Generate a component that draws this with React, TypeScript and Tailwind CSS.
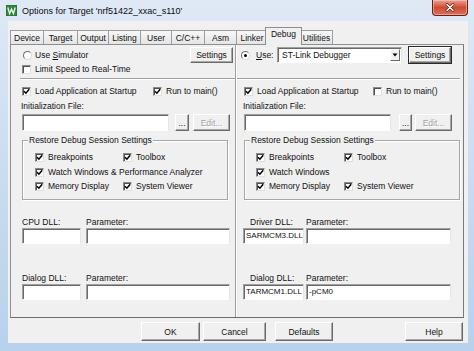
import React from "react";

const T = "text-[8.5px] leading-[12px] text-[#111]";

function Box({ checked }: { checked: boolean }) {
  return (
    <span className="flex items-center justify-center w-[9px] h-[9px] shrink-0 bg-white border border-t-[#8a8a8a] border-l-[#8a8a8a] border-b-[#e0e0e0] border-r-[#e0e0e0] shadow-[inset_1px_1px_0_#505050]">
      {checked && (
        <svg viewBox="0 0 7 7" className="w-[7px] h-[7px]">
          <path d="M1 3.2 L2.9 5.2 L6.2 1.2" stroke="#000" strokeWidth="1.5" fill="none" />
        </svg>
      )}
    </span>
  );
}

function CB({ checked, label, className = "" }: { checked: boolean; label: React.ReactNode; className?: string }) {
  return (
    <div className={`flex items-center h-[12px] shrink-0 ${className}`}>
      <Box checked={checked} />
      <span className={`ml-[4px] whitespace-nowrap ${T}`}>{label}</span>
    </div>
  );
}

function Radio({ on }: { on: boolean }) {
  return (
    <span className="flex items-center justify-center w-[9px] h-[9px] shrink-0 rounded-full bg-white border border-t-[#6f6f6f] border-l-[#6f6f6f] border-b-[#d8d8d8] border-r-[#d8d8d8]">
      {on && <span className="w-[3px] h-[3px] rounded-full bg-black" />}
    </span>
  );
}

function Btn({
  children,
  className = "",
  disabled = false,
  def = false,
}: {
  children: React.ReactNode;
  className?: string;
  disabled?: boolean;
  def?: boolean;
}) {
  return (
    <button
      type="button"
      className={`flex items-center justify-center shrink-0 bg-[#f0f0f0] border border-t-white border-l-white border-b-[#6a6a6a] border-r-[#6a6a6a] shadow-[inset_-1px_-1px_0_#a8a8a8] ${T} ${
        def ? "outline outline-1 outline-[#2a2a2a]" : ""
      } ${disabled ? "text-[#a2a2a2] [text-shadow:1px_1px_0_#fff]" : ""} ${className}`}
    >
      {children}
    </button>
  );
}

function Field({ value = "", className = "" }: { value?: string; className?: string }) {
  return (
    <div
      className={`flex items-center shrink-0 overflow-hidden whitespace-nowrap bg-white border border-t-[#a0a0a0] border-l-[#a0a0a0] border-b-white border-r-[#e6e6e6] shadow-[inset_1px_1px_0_#6a6a6a] pl-[2px] text-[8px] leading-[12px] text-[#111] ${className}`}
    >
      {value}
    </div>
  );
}

function Sep({ className = "" }: { className?: string }) {
  return <div className={`h-[2px] border-t border-t-[#a0a0a0] border-b border-b-white ${className}`} />;
}

function Group({ className = "", children }: { className?: string; children: React.ReactNode }) {
  return (
    <div
      className={`relative h-[60px] border border-[#a6a6a6] shadow-[inset_1px_1px_0_#fff,1px_1px_0_#fff] flex flex-col ${className}`}
    >
      <span className={`absolute -top-[7px] left-[5px] bg-[#f0f0f0] px-[1px] whitespace-nowrap ${T}`}>
        Restore Debug Session Settings
      </span>
      {children}
    </div>
  );
}

const tabs: [string, number][] = [
  ["Device", 33],
  ["Target", 34],
  ["Output", 31],
  ["Listing", 32],
  ["User", 31],
  ["C/C++", 33],
  ["Asm", 32],
  ["Linker", 31],
  ["Debug", 33],
  ["Utilities", 33],
];

export default function App() {
  return (
    <div className="w-[474px] h-[351px] overflow-hidden flex flex-col bg-gradient-to-b from-[#dfe9f6] via-[#c9dcf1] to-[#b8d1ec] font-['Liberation_Sans',Arial,sans-serif]">
      {/* Title bar */}
      <div className="h-[21px] flex items-center shrink-0">
        <svg viewBox="0 0 11 11" className="ml-[6px] w-[11px] h-[11px] shrink-0">
          <rect x="0" y="0" width="11" height="11" fill="#2f8a3b" stroke="#1d5d26" strokeWidth="0.8" />
          <path d="M1.8 2.5 L3.6 8.6 L5.5 4.2 L7.4 8.6 L9.2 2.5" stroke="#f4f4f4" strokeWidth="1.3" fill="none" />
        </svg>
        <span className="ml-[5px] text-[9px] leading-[12px] text-[#0b0b0b] whitespace-nowrap">
          Options for Target 'nrf51422_xxac_s110'
        </span>
        <div className="ml-auto mr-[6px] self-start w-[36px] h-[16px] rounded-b-[4px] border border-t-0 border-[#6b1e12] bg-gradient-to-b from-[#e7a191] via-[#cf4a32] to-[#d8715b] flex items-center justify-center shadow-[inset_0_0_0_1px_rgba(255,210,200,0.5)]">
          <svg viewBox="0 0 10 9" className="w-[10px] h-[9px]">
            <path d="M2 1.5 L8 7.5 M8 1.5 L2 7.5" stroke="#5a1a10" strokeWidth="2.6" strokeLinecap="round" />
            <path d="M2 1.5 L8 7.5 M8 1.5 L2 7.5" stroke="#ffffff" strokeWidth="1.5" strokeLinecap="round" />
          </svg>
        </div>
      </div>

      {/* Client area */}
      <div className="ml-[8px] w-[460px] h-[322px] bg-[#f0f0f0] flex flex-col shrink-0">
        {/* Tabs */}
        <div className="mt-[6px] ml-[2px] h-[17px] flex items-end">
          {tabs.map(([name, w], i) =>
            name === "Debug" ? (
              <div
                key={name}
                style={{ width: w + 4 }}
                className={`relative z-10 -mx-[2px] -mb-px h-[18px] flex justify-center bg-[#f0f0f0] border border-b-0 border-[#8c8e94] ${T}`}
              >
                <span className="mt-[0px]">{name}</span>
              </div>
            ) : (
              <div
                key={name}
                style={{ width: w }}
                className={`h-[14px] flex items-center justify-center bg-gradient-to-b from-[#f8f8f8] to-[#e4e4e4] border-t border-l border-[#9b9da2] ${
                  i === tabs.length - 1 ? "border-r" : ""
                } ${T}`}
              >
                {name}
              </div>
            )
          )}
        </div>

        {/* Panel */}
        <div className="ml-[2px] w-[454px] h-[274px] flex border border-[#8c8e94] border-b-[#6c6c6c] border-r-[#7a7a7a] bg-[#f0f0f0]">
          {/* Left column */}
          <div className="w-[224px] flex flex-col">
            <div className="mt-[2px] h-[16px] flex items-center">
              <div className="ml-[12px] flex items-center">
                <Radio on={false} />
                <span className={`ml-[3px] ${T}`}>
                  Use <u>S</u>imulator
                </span>
              </div>
              <Btn className="ml-auto mr-[2px] w-[43px] h-[16px]">Settings</Btn>
            </div>
            <CB className="ml-[11px]" checked={false} label="Limit Speed to Real-Time" />
            <Sep className="mt-[3px] ml-[9px]" />
            <div className="mt-[5px] ml-[11px] flex items-center">
              <CB className="w-[131px]" checked label="Load Application at Startup" />
              <CB checked label="Run to main()" />
            </div>
            <div className={`mt-[3px] ml-[10px] h-[12px] ${T}`}>Initialization File:</div>
            <div className="mt-[2px] ml-[11px] h-[17px] flex">
              <Field className="w-[147px] h-[17px]" />
              <Btn className="ml-[6px] w-[14px] h-[17px]">...</Btn>
              <Btn className="ml-[4px] w-[37px] h-[17px]" disabled>
                Edit...
              </Btn>
            </div>
            <Group className="mt-[9px] ml-[11px] w-[206px]">
              <div className="pt-[10px] pl-[12px] flex flex-col">
                <div className="flex">
                  <CB className="w-[88px]" checked label="Breakpoints" />
                  <CB checked label="Toolbox" />
                </div>
                <CB className="mt-[3px]" checked label="Watch Windows & Performance Analyzer" />
                <div className="mt-[2px] flex">
                  <CB className="w-[88px]" checked label="Memory Display" />
                  <CB checked label="System Viewer" />
                </div>
              </div>
            </Group>
            <div className={`mt-[16px] ml-[11px] h-[12px] flex ${T}`}>
              <span className="w-[64px]">CPU DLL:</span>
              <span>Parameter:</span>
            </div>
            <div className="ml-[11px] flex">
              <Field className="w-[59px] h-[16px]" />
              <Field className="ml-[5px] w-[144px] h-[16px]" />
            </div>
            <div className={`mt-[28px] ml-[11px] h-[12px] flex ${T}`}>
              <span className="w-[64px]">Dialog DLL:</span>
              <span>Parameter:</span>
            </div>
            <div className="ml-[11px] flex">
              <Field className="w-[59px] h-[16px]" />
              <Field className="ml-[5px] w-[144px] h-[16px]" />
            </div>
          </div>

          {/* Vertical separator */}
          <div className="w-[2px] border-l border-l-[#a0a0a0] border-r border-r-white" />

          {/* Right column */}
          <div className="flex-1 flex flex-col">
            <div className="mt-[2px] h-[16px] flex items-center pl-[4px]">
              <Radio on />
              <span className={`ml-[6px] w-[21px] ${T}`}>
                <u>U</u>se:
              </span>
              <div className="w-[125px] h-[16px] flex items-center bg-white border border-t-[#a0a0a0] border-l-[#a0a0a0] border-b-white border-r-[#e6e6e6] shadow-[inset_1px_1px_0_#6a6a6a]">
                <span className={`pl-[4px] flex-1 whitespace-nowrap ${T}`}>ST-Link Debugger</span>
                <div className="mr-[1px] w-[10px] h-[12px] flex items-center justify-center bg-[#f0f0f0] border border-t-white border-l-white border-b-[#6a6a6a] border-r-[#6a6a6a]">
                  <svg viewBox="0 0 6 4" className="w-[6px] h-[4px]">
                    <path d="M0.5 0.5 L5.5 0.5 L3 3.5 Z" fill="#000" />
                  </svg>
                </div>
              </div>
              <Btn def className="ml-[7px] w-[42px] h-[16px]">
                Settings
              </Btn>
            </div>
            <Sep className="mt-[15px] mr-[3px]" />
            <div className="mt-[5px] pl-[7px] flex items-center">
              <CB className="w-[129px]" checked label="Load Application at Startup" />
              <CB checked={false} label="Run to main()" />
            </div>
            <div className={`mt-[3px] pl-[6px] h-[12px] ${T}`}>Initialization File:</div>
            <div className="mt-[2px] pl-[7px] h-[17px] flex">
              <Field className="w-[147px] h-[17px]" />
              <Btn className="ml-[8px] w-[13px] h-[17px]">...</Btn>
              <Btn className="ml-[3px] w-[37px] h-[17px]" disabled>
                Edit...
              </Btn>
            </div>
            <Group className="mt-[9px] ml-[7px] w-[216px]">
              <div className="pt-[10px] pl-[11px] flex flex-col">
                <div className="flex">
                  <CB className="w-[88px]" checked label="Breakpoints" />
                  <CB checked label="Toolbox" />
                </div>
                <CB className="mt-[3px]" checked label="Watch Windows" />
                <div className="mt-[2px] flex">
                  <CB className="w-[88px]" checked label="Memory Display" />
                  <CB checked label="System Viewer" />
                </div>
              </div>
            </Group>
            <div className={`mt-[16px] pl-[13px] h-[12px] flex ${T}`}>
              <span className="w-[56px]">Driver DLL:</span>
              <span>Parameter:</span>
            </div>
            <div className="pl-[6px] flex">
              <Field className="w-[61px] h-[16px]" value="SARMCM3.DLL" />
              <Field className="ml-[2px] w-[145px] h-[16px]" />
            </div>
            <div className={`mt-[28px] pl-[13px] h-[12px] flex ${T}`}>
              <span className="w-[56px]">Dialog DLL:</span>
              <span>Parameter:</span>
            </div>
            <div className="pl-[6px] flex">
              <Field className="w-[61px] h-[16px]" value="TARMCM1.DLL" />
              <Field className="ml-[2px] w-[145px] h-[16px]" value="-pCM0" />
            </div>
          </div>
        </div>

        {/* Bottom buttons */}
        <div className="mt-[4px] h-[19px] flex">
          <Btn className="ml-[133px] w-[59px] h-[19px]">OK</Btn>
          <Btn className="ml-[3px] w-[63px] h-[19px]">Cancel</Btn>
          <Btn className="ml-[9px] w-[58px] h-[19px]">Defaults</Btn>
          <Btn className="ml-auto mr-[5px] w-[58px] h-[19px]">Help</Btn>
        </div>
      </div>
    </div>
  );
}
